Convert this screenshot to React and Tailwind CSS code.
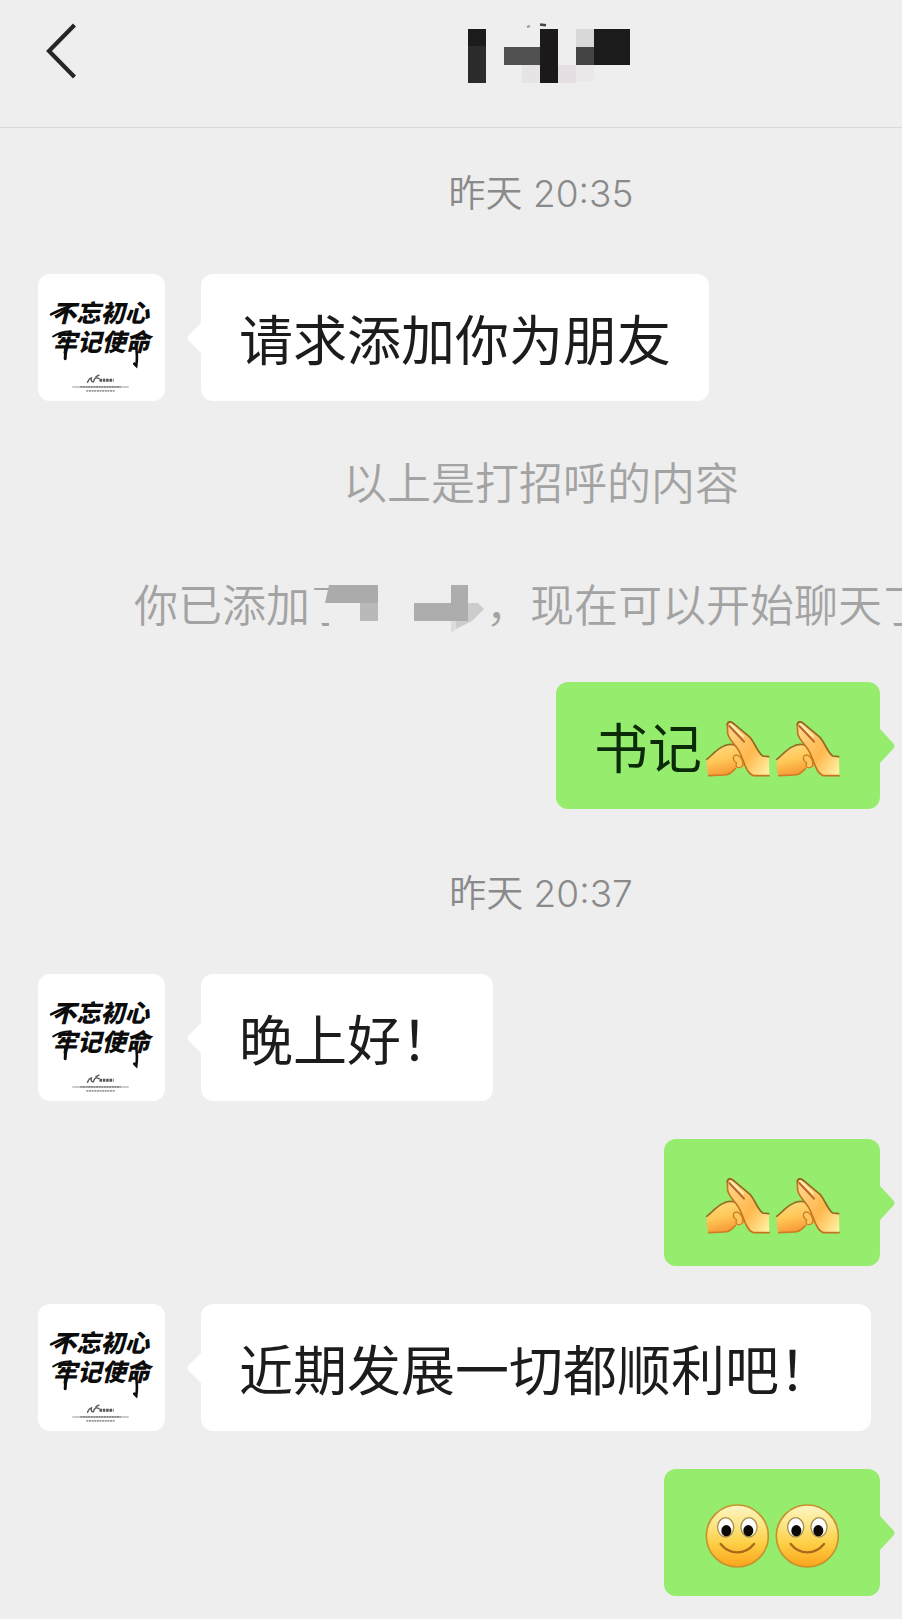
import React from "react";

const HANZI = "font-['Noto_Sans_CJK_SC',sans-serif]";

function BackButton() {
  return (
    <button type="button" aria-label="返回" className="flex h-14 w-8 items-center justify-center">
      <svg viewBox="0 0 32 56" className="h-14 w-8" fill="none" stroke="#262626" strokeWidth="4.2">
        <path d="M29.5 2 L4 28 L29.5 54" strokeLinejoin="miter" />
      </svg>
    </button>
  );
}

/* Contact name hidden behind a pixel mosaic */
function MaskedName() {
  return (
    <svg viewBox="0 0 162 60" className="h-15 w-[162px]" role="img" aria-label="联系人">
      <path d="M59 4 l3 -1" stroke="#999" strokeWidth="2" />
      <path d="M72 1.500 l6 .8" stroke="#444" strokeWidth="2.500" />
      <rect x="54" y="42" width="18" height="18" fill="#e6e4e5" />
      <rect x="90" y="42" width="18" height="18" fill="#e5dfe3" />
      <rect x="108" y="42" width="18" height="16" fill="#ebe8ea" />
      <rect x="0" y="6" width="18" height="54" fill="#2b2b2b" />
      <rect x="0" y="6" width="18" height="17" fill="#1b1b1b" />
      <rect x="36" y="24" width="36" height="18" fill="#515151" />
      <rect x="72" y="6" width="18" height="54" fill="#1c191b" />
      <rect x="108" y="6" width="18" height="18" fill="#d8d8d8" />
      <rect x="108" y="24" width="18" height="18" fill="#444444" />
      <rect x="126" y="6" width="36" height="36" fill="#1b1b1b" />
    </svg>
  );
}

/* Mosaic over the name inside the system notice; also hides part of the previous character */
function MaskedNotice() {
  return (
    <span className="relative inline-block h-13 w-[132px] shrink-0">
      <svg viewBox="0 0 174 60" className="absolute top-0 right-0 h-15 w-[174px]" aria-hidden="true">
        <rect x="2" y="13" width="30" height="28" fill="#eeeeee" />
        <rect x="17" y="13" width="18" height="36" fill="#eeeeee" />
        <path d="M17 8 H66 V44 H48 V26 H13 Z" fill="#ababab" />
        <path d="M48 26 H66 V44 H48 Z" fill="#b9b9b9" />
        <path d="M139 44 H154 L139 56 Z" fill="#dcdcdc" />
        <path d="M156 26 H166 L172 32 L160 44 L144 52 V44 H156 Z" fill="#cccccc" />
        <path d="M102 26 H139 V8 H156 V44 H102 Z" fill="#adadad" />
      </svg>
    </span>
  );
}

function Avatar() {
  return (
    <div className="size-[127px] shrink-0 overflow-hidden rounded-xl bg-white">
      <svg viewBox="0 0 126 126" className="size-full" role="img" aria-label="不忘初心 牢记使命">
        <g
          fill="#0c0c0c"
          fontFamily="'Noto Sans CJK SC', sans-serif"
          fontWeight="900"
          fontStyle="italic"
          fontSize="24"
        >
          <text x="14" y="48">不忘初心</text>
          <text x="15" y="76">牢记使命</text>
        </g>
        <g fill="none" stroke="#0c0c0c" strokeLinecap="round">
          <path d="M27.500 74 L27 84" strokeWidth="3" />
          <path d="M97 70 Q99 82 97.500 91 L95.500 89" strokeWidth="2.600" />
          <path d="M13 40 Q23 35 37 30" strokeWidth="2.600" />
          <path d="M15 62 Q22 57 32 57" strokeWidth="2" />
        </g>
        <g fill="none" stroke="#555">
          <path d="M49 108 Q50 104 53 103 Q52 107 55 107 Q56 101 61 104 M57 102 L61 100" strokeWidth="1.300" />
          <path d="M61 105.500 H75" strokeWidth="3" strokeDasharray="2.500 .8" />
          <path d="M34 112 H90" strokeWidth="1" stroke="#999" />
          <path d="M42 112 H82" strokeWidth="1.800" strokeDasharray="2 .6" stroke="#888" />
          <path d="M48 116 H76" strokeWidth="1.800" strokeDasharray="2 .6" stroke="#999" />
        </g>
      </svg>
    </div>
  );
}

function HandsEmoji() {
  return (
    <svg viewBox="36 21 210 210" className="size-[70px] shrink-0" role="img" aria-label="抱拳">
      <defs>
        <linearGradient id="fist" x1="0" y1="0" x2="0.3" y2="1">
          <stop offset="0" stopColor="#ffdc86" />
          <stop offset="0.55" stopColor="#ffc858" />
          <stop offset="1" stopColor="#f79a35" />
        </linearGradient>
        <linearGradient id="palm" x1="0" y1="0" x2="1" y2="0.9">
          <stop offset="0" stopColor="#ffd890" />
          <stop offset="0.6" stopColor="#ffb84e" />
          <stop offset="1" stopColor="#fff0a0" />
        </linearGradient>
      </defs>
      <path
        d="M50 168 C64 157 76 141 94 130 C108 121 126 119 140 126 L160 150 L168 176 C164 190 150 193 136 192 C127 202 120 213 104 213 L56 215 C50 202 50 184 50 168 Z"
        fill="url(#fist)"
      />
      <path
        d="M50 166 C64 155 76 141 94 130 C108 121 126 119 140 126"
        fill="none"
        stroke="#927024"
        strokeWidth="5"
        strokeLinecap="round"
      />
      <path
        d="M56 215 L104 213 C120 213 127 202 136 194"
        fill="none"
        stroke="#cf7d24"
        strokeWidth="5"
        strokeLinecap="round"
      />
      <path
        d="M113 56 C119 48 126 54 132 60 L180 100 C193 113 203 146 218 156 L237 158 L238 215 L190 215 C174 210 172 198 165 184 C159 170 154 155 147 141 C137 122 117 108 113 88 Z"
        fill="url(#palm)"
      />
      <path
        d="M190 215 C174 210 172 198 165 184 C159 170 154 155 147 141 C137 122 117 108 113 88 L112 62 C114 48 126 54 132 60 M190 215 H237"
        fill="none"
        stroke="#c4731f"
        strokeWidth="5"
        strokeLinecap="round"
        strokeLinejoin="round"
      />
      <path
        d="M112 62 C114 48 126 54 132 60 L180 100 C193 113 203 146 218 156 L236 158"
        fill="none"
        stroke="#92691f"
        strokeWidth="5"
        strokeLinecap="round"
      />
      <path d="M118 66 L162 113" fill="none" stroke="#b8662a" strokeWidth="6" strokeLinecap="round" />
      <path d="M122 61 L160 98" fill="none" stroke="#fff0bd" strokeWidth="5" strokeLinecap="round" />
      <path
        d="M131 158 C137 148 151 154 156 168 C161 179 158 190 149 191 C139 192 136 185 140 177 C135 174 128 168 131 158 Z"
        fill="#ffc65d"
        stroke="#cb7f25"
        strokeWidth="4"
      />
    </svg>
  );
}

function SmileEmoji() {
  return (
    <svg viewBox="156 111 210 210" className="size-[70px] shrink-0" role="img" aria-label="微笑">
      <defs>
        <linearGradient id="face" x1="0" y1="0" x2="0" y2="1">
          <stop offset="0" stopColor="#fdf6c4" />
          <stop offset="0.3" stopColor="#fbe68a" />
          <stop offset="0.62" stopColor="#fdcf45" />
          <stop offset="1" stopColor="#fba41c" />
        </linearGradient>
      </defs>
      <circle cx="262" cy="225" r="93" fill="url(#face)" stroke="#c8922a" strokeWidth="5" />
      <ellipse cx="227" cy="199" rx="24" ry="29" fill="#fff" stroke="#a98e4c" strokeWidth="4" />
      <ellipse cx="297" cy="199" rx="24" ry="29" fill="#fff" stroke="#a98e4c" strokeWidth="4" />
      <ellipse cx="229" cy="209" rx="15" ry="17" fill="#0d0a06" />
      <ellipse cx="295" cy="209" rx="15" ry="17" fill="#0d0a06" />
      <path d="M212 249 Q232 274 262 274 Q292 274 312 249" fill="none" stroke="#a9681a" strokeWidth="7" strokeLinecap="round" />
    </svg>
  );
}

function Received({ children }) {
  return (
    <div className="flex gap-9 pr-5 pl-[38px]">
      <Avatar />
      <div className="relative flex min-h-[127px] items-center rounded-xl bg-white px-[38px]">
        <svg viewBox="0 0 16 32" className="absolute top-1/2 right-full h-8 w-4 -translate-y-1/2" aria-hidden="true">
          <path d="M16 1 L4 13 Q1 16 4 19 L16 31 Z" fill="#fff" />
        </svg>
        <p className="text-[54px] leading-[64px] text-[#1c1c1c]">{children}</p>
      </div>
    </div>
  );
}

function Sent({ text, children }) {
  return (
    <div className="flex justify-end pr-[22px] pl-[38px]">
      <div className="relative flex min-h-[127px] items-center rounded-xl bg-[#96ec6d] px-[38px]">
        {text && <p className="text-[54px] leading-[64px] text-[#0a2a08]">{text}</p>}
        {children}
        <svg viewBox="0 0 16 36" className="absolute top-1/2 left-full h-9 w-4 -translate-y-1/2" aria-hidden="true">
          <path d="M0 1 L13 15 Q16 18 13 21 L0 35 Z" fill="#96ec6d" />
        </svg>
      </div>
    </div>
  );
}

function Time({ children }) {
  return (
    <p className="pl-[180px] text-center font-[Inter,'Noto_Sans_CJK_SC',sans-serif] text-[37px] leading-[52px] font-[350] text-[#8a8a8a]">
      {children}
    </p>
  );
}

export default function App() {
  return (
    <div className={`min-h-screen overflow-hidden bg-[#eeeeee] ${HANZI}`}>
      <header className="flex h-32 items-start border-b border-[#d9d9d9] pt-[23px] pl-[45px]">
        <BackButton />
        <h1 className="flex flex-1 justify-center pl-[118px]">
          <MaskedName />
        </h1>
      </header>

      <main className="flex flex-col pt-10 pb-[22px]">
        <Time>昨天 20:35</Time>
        <div className="mt-[54px]">
          <Received>请求添加你为朋友</Received>
        </div>

        <p className="mt-[54px] pl-[180px] text-center text-[44px] leading-[52px] font-[350] text-[#a3a3a3]">
          以上是打招呼的内容
        </p>
        <p className="mt-[70px] flex pl-[134px] text-[44px] leading-[52px] font-[350] whitespace-nowrap text-[#a3a3a3]">
          <span>你已添加了</span>
          <MaskedNotice />
          <span>，现在可以开始聊天了</span>
        </p>

        <div className="mt-[53px]">
          <Sent text="书记">
            <HandsEmoji />
            <HandsEmoji />
          </Sent>
        </div>

        <div className="mt-[59px]">
          <Time>昨天 20:37</Time>
        </div>

        <div className="mt-[54px] flex flex-col gap-[38px]">
          <Received>晚上好！</Received>
          <Sent>
            <HandsEmoji />
            <HandsEmoji />
          </Sent>
          <Received>近期发展一切都顺利吧！</Received>
          <Sent>
            <SmileEmoji />
            <SmileEmoji />
          </Sent>
        </div>
      </main>
    </div>
  );
}
